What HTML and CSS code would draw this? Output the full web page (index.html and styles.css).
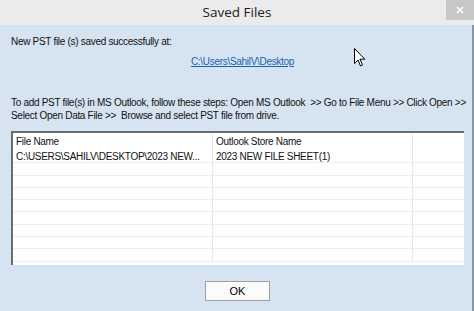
FILE: index.html
```html
<!DOCTYPE html>
<html lang="en">
<head>
    <meta charset="UTF-8">
    <meta name="viewport" content="width=device-width, initial-scale=1.0">
    <title>Saved Files</title>
    <link rel="stylesheet" href="styles.css">
</head>
<body>
    <div class="window">
        <!-- Title bar -->
        <div class="titlebar">
            <span></span>
            <span class="title">Saved Files</span>
            <button class="close-btn" aria-label="Close">
                <svg width="8" height="8" viewBox="0 0 8 8"><path d="M1 1 L7 7 M7 1 L1 7" stroke="#fff" stroke-width="1.6"/></svg>
            </button>
        </div>

        <div class="content">
            <p class="msg">New PST file (s) saved successfully at:</p>
            <div class="path-row">
                <a href="#" class="path-link">C:\Users\SahilV\Desktop</a>
            </div>

            <!-- mouse pointer over the dialog -->
            <svg class="pointer" width="12" height="19" viewBox="0 0 12 19">
                <path d="M0.5 0.5 L0.5 15.5 L4 12 L6.5 18 L8.5 17 L6 11.2 L10.8 11.2 Z" fill="#fff" stroke="#000" stroke-width="1"/>
            </svg>

            <p class="steps">To add PST file(s) in MS Outlook, follow these steps: Open MS Outlook&nbsp; &gt;&gt; Go to File Menu &gt;&gt; Click Open &gt;&gt;<br>Select Open Data File &gt;&gt;&nbsp; Browse and select PST file from drive.</p>

            <!-- Saved files list -->
            <div class="list">
                <div class="list-row list-head">
                    <div class="cell c1">File Name</div>
                    <div class="cell c2">Outlook Store Name</div>
                    <div class="cell c3"></div>
                </div>
                <div class="list-row">
                    <div class="cell c1">C:\USERS\SAHILV\DESKTOP\2023 NEW...</div>
                    <div class="cell c2">2023 NEW FILE SHEET(1)</div>
                    <div class="cell c3"></div>
                </div>
                <div class="list-row"><div class="cell c1"></div><div class="cell c2"></div><div class="cell c3"></div></div>
                <div class="list-row"><div class="cell c1"></div><div class="cell c2"></div><div class="cell c3"></div></div>
                <div class="list-row"><div class="cell c1"></div><div class="cell c2"></div><div class="cell c3"></div></div>
                <div class="list-row"><div class="cell c1"></div><div class="cell c2"></div><div class="cell c3"></div></div>
                <div class="list-row"><div class="cell c1"></div><div class="cell c2"></div><div class="cell c3"></div></div>
                <div class="list-row"><div class="cell c1"></div><div class="cell c2"></div><div class="cell c3"></div></div>
                <div class="list-row"><div class="cell c1"></div><div class="cell c2"></div><div class="cell c3"></div></div>
                <div class="list-row"><div class="cell c1"></div><div class="cell c2"></div><div class="cell c3"></div></div>
            </div>

            <div class="footer">
                <button class="ok-btn">OK</button>
            </div>
        </div>
    </div>
</body>
</html>
```

FILE: styles.css
```css
body {
    margin: 0;
    padding: 0;
    font-family: "Liberation Sans", Arial, sans-serif;
    font-size: 10px;
    letter-spacing: -0.3px;
    color: #111;
    background-color: #d6e4f2;
}

.window {
    width: 474px;
    height: 311px;
    display: flex;
    flex-direction: column;
    overflow: hidden;
}

/* Title bar */
.titlebar {
    height: 25px;
    background-color: #ebebeb;
    display: grid;
    grid-template-columns: 1fr auto 1fr;
    flex-shrink: 0;
}

.title {
    font-family: "Open Sans", "Liberation Sans", sans-serif;
    font-size: 13.5px;
    letter-spacing: 0;
    color: #222;
    line-height: 25px;
}

.close-btn {
    justify-self: end;
    width: 28px;
    height: 20px;
    background-color: #c7c7c7;
    border: none;
    padding: 0;
    display: flex;
    align-items: center;
    justify-content: center;
}

.content {
    position: relative;
    flex: 1;
    padding: 0 6px 0 11px;
    border-right: 2px solid #8a96a3;
}

.msg {
    margin: 10px 0 0;
    line-height: 13px;
}

.path-row {
    text-align: center;
    margin-top: 7px;
    padding-left: 8px;
    line-height: 13px;
}

.path-link {
    color: #1b5fae;
    text-decoration: underline;
}

.pointer {
    position: absolute;
    left: 354px;
    top: 23px;
}

.steps {
    margin: 28px 0 0;
    line-height: 13px;
}

/* File list */
.list {
    margin-top: 9px;
    width: 453px;
    height: 134px;
    background-color: #fff;
    border-top: 2px solid #6c6c6c;
    border-left: 2px solid #6c6c6c;
    box-sizing: border-box;
    overflow: hidden;
}

.list-row {
    display: flex;
    height: 12.3px;
    border-bottom: 1px solid #eeeeee;
    box-sizing: border-box;
}

.list-head {
    height: 18px;
    border-bottom: none;
}

.cell {
    padding-left: 3px;
    line-height: 12px;
    white-space: nowrap;
    overflow: hidden;
    border-right: 1px solid #e6e6e6;
}

.list-head .cell {
    line-height: 18px;
}

.c1 {
    width: 196px;
}

.c2 {
    width: 196px;
}

.c3 {
    flex: 1;
    border-right: none;
}

.footer {
    display: flex;
    justify-content: center;
    padding-top: 16px;
}

.ok-btn {
    width: 65px;
    height: 20px;
    font-family: "Liberation Sans", Arial, sans-serif;
    font-size: 11px;
    background-color: #fbfbfb;
    border: 1px solid #a0a0a0;
    padding: 0;
    margin-left: -2px;
}
```
